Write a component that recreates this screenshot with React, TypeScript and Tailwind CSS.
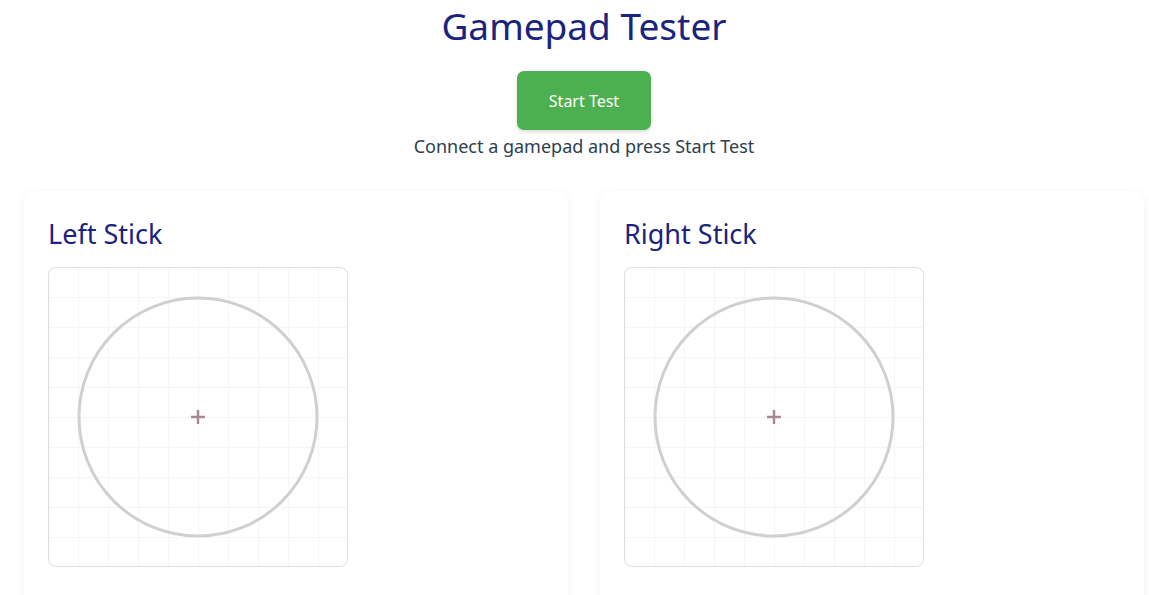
import React from "react";

function Stick({ title }: { title: string }) {
  return (
    <div className="w-[544px] h-[420px] bg-white rounded-[10px] shadow-[0_2px_8px_rgba(0,0,0,0.06)] px-6 pt-[23px]">
      <h2 className="text-[27px] leading-[40px] text-[#1a237e] mb-[13px]">{title}</h2>
      <div
        className="relative w-[300px] h-[300px] border border-[#dddddd] rounded-[8px] overflow-hidden bg-white bg-[linear-gradient(#f5f5f5_1px,transparent_1px),linear-gradient(90deg,#f5f5f5_1px,transparent_1px)] bg-[length:30px_30px] bg-[position:-1px_-1px]"
      >
        <svg className="absolute inset-0" width="298" height="298" viewBox="0 0 298 298">
          <circle cx="149" cy="149" r="119" fill="none" stroke="#d0d0d0" strokeWidth="3" />
          <line x1="142" y1="149" x2="156" y2="149" stroke="#a48a8e" strokeWidth="2.5" />
          <line x1="149" y1="142" x2="149" y2="156" stroke="#a48a8e" strokeWidth="2.5" />
        </svg>
      </div>
    </div>
  );
}

export default function App() {
  return (
    <div className="w-[1168px] min-h-[595px] bg-white font-['Noto_Sans','Open_Sans',sans-serif] overflow-hidden">
      <div className="flex flex-col items-center">
        <h1 className="mt-[2px] text-[37px] leading-[48px] text-[#1a237e]">Gamepad Tester</h1>
        <button className="mt-[21px] w-[134px] h-[59px] rounded-[7px] bg-[#4caf50] text-white text-[16px] shadow-[0_2px_4px_rgba(0,0,0,0.15)]">
          Start Test
        </button>
        <p className="mt-[4px] text-[18px] leading-[24px] text-[#2c3e50]">Connect a gamepad and press Start Test</p>
      </div>
      <div className="flex gap-8 px-6 mt-[33px]">
        <Stick title="Left Stick" />
        <Stick title="Right Stick" />
      </div>
    </div>
  );
}
